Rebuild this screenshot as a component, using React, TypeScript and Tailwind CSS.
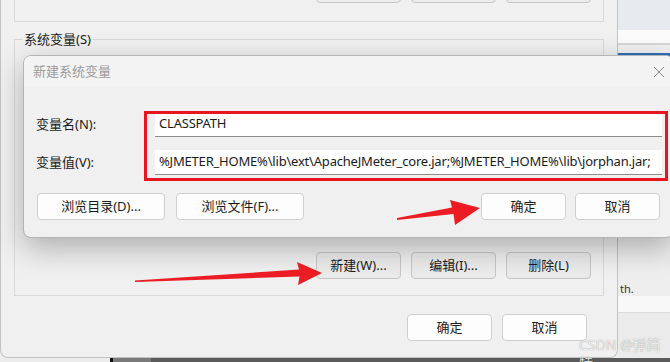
import type { ReactNode } from 'react';

const font = "font-['Noto_Sans','Noto_Sans_CJK_SC',sans-serif]";

const WinButton = ({ children, className = '' }: { children: ReactNode; className?: string }) => (
  <div
    className={`flex items-center justify-center h-[27px] rounded-[4px] border border-[#cfcfcf] bg-[#fdfdfd] text-[13px] text-[#1a1a1a] ${className}`}
  >
    {children}
  </div>
);

const ListButtons = ({ labels }: { labels: string[] }) => (
  <div className="flex justify-end gap-[10px]">
    {labels.map((l, i) => (
      <div
        key={i}
        className="flex items-center justify-center w-[85px] h-[27px] rounded-[4px] border border-[#c6c6c6] bg-[#ebebeb] text-[13px] text-[#1a1a1a]"
      >
        {l}
      </div>
    ))}
  </div>
);

const EnvWindow = () => (
  <div className="w-[618px] h-full flex flex-col px-[13px] border-l border-r border-b border-[#c2c2c2] rounded-b-[8px] bg-[#f0f0f0]">
    {/* user variables group, scrolled above the view: only the button bottoms show */}
    <div className="h-[22px] border-x border-b border-[#d9d9d9] pr-[12px]">
      <div className="-mt-[24px]">
        <ListButtons labels={['', '', '']} />
      </div>
    </div>

    {/* system variables group */}
    <div className="relative mt-[17px] h-[257px] border border-[#d9d9d9] flex flex-col justify-end pb-[16px] pr-[12px]">
      <span className="absolute -top-[10px] left-[8px] px-[1px] bg-[#f0f0f0] text-[13px] leading-[18px] text-[#1a1a1a]">
        系统变量(S)
      </span>
      <ListButtons labels={['新建(W)...', '编辑(I)...', '删除(L)']} />
    </div>

    <div className="flex justify-end gap-[10px] mt-[18px] pr-[17px]">
      <WinButton className="w-[85px]">确定</WinButton>
      <WinButton className="w-[85px]">取消</WinButton>
    </div>
  </div>
);

const Backdrop = () => (
  <div className="flex-1 flex flex-col">
    <div className="h-[30px] bg-[#e7eaef]" />
    <div className="h-[13px] bg-[#fbfbfb]" />
    <div className="h-[2px] bg-[#d6d6d6]" />
    <div className="h-[8px] bg-[#f0f0f0]" />
    <div className="h-[3px] bg-[#2f6fba]" />
    <div className="h-[240px] bg-[#eeeeee] flex items-end pl-[2px] pb-[1px]">
      <span className="text-[11px] leading-[12px] text-[#333]">th.</span>
    </div>
    <div className="h-[16px] bg-[#f8f8f8]" />
    <div className="h-[1px] bg-[#dcdcdc]" />
    <div className="flex-1 bg-[#ebebeb]" />
  </div>
);

const NewVarDialog = () => (
  <div className="absolute left-[23px] top-[55px] w-[651px] h-[183px] rounded-[8px] border border-[#b4b4b4] bg-[#f0f0f0] shadow-[0_10px_30px_rgba(0,0,0,0.28)] overflow-hidden">
    <div className="h-[31px] flex items-center justify-between pl-[9px] pr-[8px] bg-[#f3f3f3]">
      <span className="text-[13px] text-[#9b9b9b]">新建系统变量</span>
      <svg width="12" height="12" viewBox="0 0 12 12">
        <path d="M1 1 L11 11 M11 1 L1 11" stroke="#8a8a8a" strokeWidth="1" />
      </svg>
    </div>
    <div className="flex flex-col pl-[12px] pr-[11px] pt-[25px]">
      <div className="flex items-center h-[25px]">
        <span className="w-[119px] text-[13px] text-[#1a1a1a]">变量名(N):</span>
        <div className="flex-1 h-full flex items-center pl-[4px] bg-white border-b border-[#8c8c8c] text-[13px] tracking-[-0.2px] text-[#1a1a1a]">
          CLASSPATH
        </div>
      </div>
      <div className="flex items-center h-[25px] mt-[13px]">
        <span className="w-[119px] text-[13px] text-[#1a1a1a]">变量值(V):</span>
        <div className="flex-1 h-full flex items-center pl-[4px] bg-white border-b border-[#8c8c8c] text-[13px] tracking-[-0.2px] text-[#1a1a1a] whitespace-nowrap overflow-hidden">
          %JMETER_HOME%\lib\ext\ApacheJMeter_core.jar;%JMETER_HOME%\lib\jorphan.jar;
        </div>
      </div>
      <div className="flex items-center mt-[18px] pl-[1px] pr-[2px]">
        <WinButton className="w-[128px]">浏览目录(D)...</WinButton>
        <WinButton className="w-[128px] ml-[11px]">浏览文件(F)...</WinButton>
        <WinButton className="w-[85px] ml-auto">确定</WinButton>
        <WinButton className="w-[85px] ml-[9px]">取消</WinButton>
      </div>
    </div>
  </div>
);

const App = () => {
  return (
    <div className={`relative w-[670px] h-[362px] overflow-hidden bg-[#eeeeee] ${font}`}>
      <div className="flex h-[358px]">
        <EnvWindow />
        <Backdrop />
      </div>
      {/* sliver of the window behind */}
      <div className="flex h-[4px]">
        <div className="w-[110px] bg-[#ececec]" />
        <div className="w-[3px] bg-[#111]" />
        <div className="w-[38px] bg-[#7a7a7a]" />
        <div className="flex-1 bg-[#5a5a5a]" />
      </div>

      <NewVarDialog />

      {/* annotations */}
      <div className="absolute left-[144px] top-[111px] w-[524px] h-[70px] border-[3px] border-[#e8141e]" />
      <svg className="absolute inset-0 pointer-events-none" width="670" height="362" viewBox="0 0 670 362">
        <path d="M397 218 L452 207.5 L450 200 L480 208 L455 225 L453.5 214 L397 220 Z" fill="#ec1c24" />
        <path d="M135 280.5 L299 269.5 L297 262 L322 273 L298 285 L299.5 276.5 L135 282 Z" fill="#ec1c24" />
      </svg>

      <span className="absolute left-[579px] top-[336px] text-[14px] leading-[18px] text-white/80 [text-shadow:0_0_1px_rgba(0,0,0,0.45)]">
        CSDN @弹简特
      </span>
    </div>
  );
};

export default App;
